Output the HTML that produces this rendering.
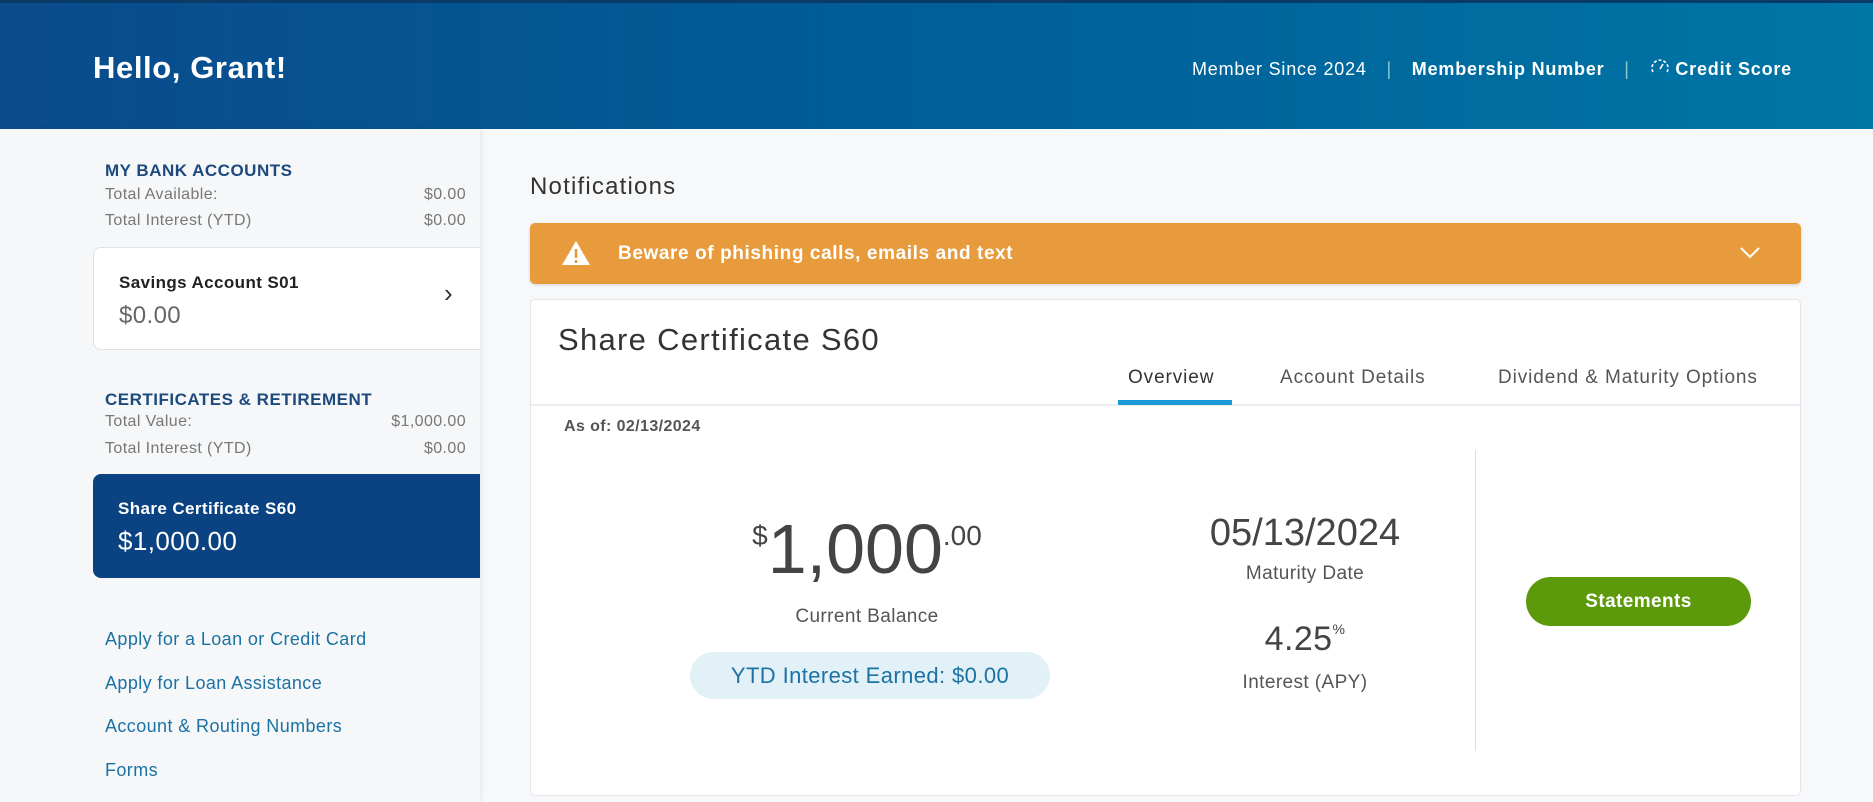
<!DOCTYPE html>
<html><head><meta charset="utf-8"><style>
*{margin:0;padding:0;box-sizing:border-box}
body{width:1873px;height:802px;overflow:hidden;background:#f6f8fa;font-family:"Liberation Sans",sans-serif;position:relative;letter-spacing:.4px}
.a{position:absolute;white-space:nowrap}
#hdr{position:absolute;left:0;top:0;width:1873px;height:129px;background:linear-gradient(90deg,#0a4b8c 0%,#005e98 50%,#0076a6 100%);border-top:3px solid #0a3a66}
#side{position:absolute;left:0;top:129px;width:480px;height:673px;background:#f5f7f9;box-shadow:2px 0 4px rgba(0,0,0,.06)}
.lbl{color:#777;font-size:16px}
.hd{color:#1d4a7c;font-size:17px;font-weight:bold;letter-spacing:.5px}
.lnk{color:#1b72a3;font-size:18px}
.tab{font-size:19px;letter-spacing:.9px}
</style></head><body>
<div id="hdr">
<div class="a" style="left:93px;top:47px;color:#fff;font-size:31px;font-weight:bold;letter-spacing:.6px">Hello, Grant!</div>
<div class="a" style="left:1192px;top:55px;color:#fff;font-size:18px;letter-spacing:.8px">Member Since 2024 <span style="margin:0 14px;color:#8cc">|</span> <b>Membership Number</b> <span style="margin:0 14px;color:#8cc">|</span>
<svg width="20" height="18" viewBox="0 0 20 18" style="vertical-align:-1px"><path d="M3 14A8 8 0 1 1 17 14" fill="none" stroke="#fff" stroke-width="1.6" stroke-dasharray="3 2"/><path d="M10 11L13 6" stroke="#fff" stroke-width="1.6"/></svg> <b>Credit Score</b></div>
</div>
<div id="side">
<div class="a hd" style="left:105px;top:32px">MY BANK ACCOUNTS</div>
<div class="a lbl" style="left:105px;top:57px">Total Available:</div><div class="a lbl" style="right:14px;top:57px">$0.00</div>
<div class="a lbl" style="left:105px;top:83px">Total Interest (YTD)</div><div class="a lbl" style="right:14px;top:83px">$0.00</div>
<div class="a" style="left:93px;top:118px;width:387px;height:103px;background:#fff;border:1px solid #dde2e6;border-right:none;border-radius:8px 0 0 8px">
<div class="a" style="left:25px;top:25px;font-size:17px;font-weight:bold;color:#222">Savings Account S01</div>
<div class="a" style="left:25px;top:54px;font-size:24px;color:#666">$0.00</div>
<div class="a" style="left:350px;top:30px;font-size:26px;color:#333">&#8250;</div></div>
<div class="a hd" style="left:105px;top:261px">CERTIFICATES &amp; RETIREMENT</div>
<div class="a lbl" style="left:105px;top:284px">Total Value:</div><div class="a lbl" style="right:14px;top:284px">$1,000.00</div>
<div class="a lbl" style="left:105px;top:311px">Total Interest (YTD)</div><div class="a lbl" style="right:14px;top:311px">$0.00</div>
<div class="a" style="left:93px;top:345px;width:387px;height:104px;background:#0a4282;border-radius:8px 0 0 8px">
<div class="a" style="left:25px;top:25px;font-size:17px;font-weight:bold;color:#fff">Share Certificate S60</div>
<div class="a" style="left:25px;top:52px;font-size:26px;color:#fff">$1,000.00</div></div>
<div class="a lnk" style="left:105px;top:500px">Apply for a Loan or Credit Card</div>
<div class="a lnk" style="left:105px;top:544px">Apply for Loan Assistance</div>
<div class="a lnk" style="left:105px;top:587px">Account &amp; Routing Numbers</div>
<div class="a lnk" style="left:105px;top:631px">Forms</div>
</div>
<div class="a" style="left:530px;top:173px;font-size:24px;color:#333;letter-spacing:1.2px">Notifications</div>
<div class="a" style="left:530px;top:223px;width:1271px;height:61px;background:#e89b3c;border-radius:5px;box-shadow:0 1px 3px rgba(0,0,0,.15)">
<svg class="a" style="left:31px;top:17px" width="30" height="26" viewBox="0 0 30 26"><path d="M15 1L29 25H1Z" fill="#fff"/><path d="M15 9V18M15 20V23" stroke="#e89b3c" stroke-width="2.6"/></svg>
<div class="a" style="left:88px;top:20px;color:#fff;font-size:19px;font-weight:bold;letter-spacing:.6px">Beware of phishing calls, emails and text</div>
<svg class="a" style="left:1209px;top:23px" width="22" height="14" viewBox="0 0 22 14"><path d="M2 2L11 11L20 2" fill="none" stroke="#fff" stroke-width="2"/></svg></div>
<div class="a" style="left:530px;top:299px;width:1271px;height:497px;background:#fff;border:1px solid #e3e6ea;border-radius:5px">
<div class="a" style="left:27px;top:22px;font-size:31px;color:#333;letter-spacing:1.3px">Share Certificate S60</div>
<div class="a tab" style="left:597px;top:67px;color:#333">Overview</div>
<div class="a tab" style="left:749px;top:67px;color:#555">Account Details</div>
<div class="a tab" style="left:967px;top:67px;color:#555">Dividend &amp; Maturity Options</div>
<div class="a" style="left:0;top:104px;width:1269px;height:2px;background:#eceff2"></div>
<div class="a" style="left:587px;top:100px;width:114px;height:5px;background:#1a9ad6"></div>
<div class="a" style="left:33px;top:118px;font-size:16px;font-weight:bold;color:#555">As of: 02/13/2024</div>
<div class="a" style="left:194px;top:214px;width:284px;text-align:center;color:#444;font-size:70px;line-height:1;letter-spacing:0"><sup style="font-size:28px;vertical-align:28px">$</sup>1,000<sup style="font-size:28px;vertical-align:28px">.00</sup></div>
<div class="a" style="left:214px;top:306px;width:244px;text-align:center;font-size:19px;color:#555">Current Balance</div>
<div class="a" style="left:159px;top:352px;width:360px;height:47px;background:#e2f0f8;border-radius:24px;text-align:center;line-height:47px;color:#1b72a3;font-size:22px">YTD Interest Earned: $0.00</div>
<div class="a" style="left:674px;top:212px;width:200px;text-align:center;font-size:38px;color:#444;letter-spacing:0">05/13/2024</div>
<div class="a" style="left:674px;top:263px;width:200px;text-align:center;font-size:19px;color:#555">Maturity Date</div>
<div class="a" style="left:674px;top:320px;width:200px;text-align:center;font-size:34px;color:#444">4.25<sup style="font-size:14px;vertical-align:16px">%</sup></div>
<div class="a" style="left:674px;top:372px;width:200px;text-align:center;font-size:19px;color:#555">Interest (APY)</div>
<div class="a" style="left:944px;top:150px;width:1px;height:301px;background:#cfe3ef"></div>
<div class="a" style="left:995px;top:277px;width:225px;height:49px;background:#5d9a0b;border-radius:25px;text-align:center;line-height:49px;color:#fff;font-weight:bold;font-size:19px">Statements</div>
</div>
</body></html>
